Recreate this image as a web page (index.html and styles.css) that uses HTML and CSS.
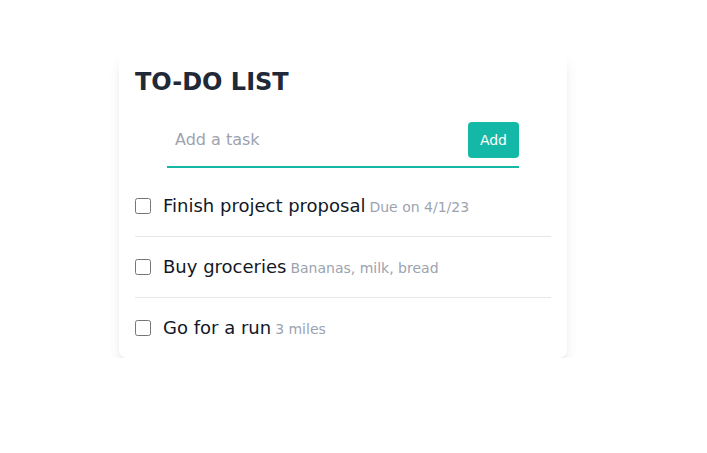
FILE: index.html
```html
<!DOCTYPE html>
<html lang="en">
<head>
<meta charset="utf-8">
<title>To-Do List</title>
<link rel="stylesheet" href="styles.css">
</head>
<body>
<div class="page">
  <div class="card">
    <h1 class="title">TO-DO LIST</h1>
    <form class="add-form">
      <input class="add-input" type="text" placeholder="Add a task">
      <button class="add-btn" type="button">Add</button>
    </form>
    <ul class="tasks">
      <li class="task">
        <input class="check" type="checkbox">
        <span class="task-text"><span class="task-name">Finish project proposal</span><span class="task-note">Due on 4/1/23</span></span>
      </li>
      <li class="task">
        <input class="check" type="checkbox">
        <span class="task-text"><span class="task-name">Buy groceries</span><span class="task-note">Bananas, milk, bread</span></span>
      </li>
      <li class="task">
        <input class="check" type="checkbox">
        <span class="task-text"><span class="task-name">Go for a run</span><span class="task-note">3 miles</span></span>
      </li>
    </ul>
  </div>
</div>
</body>
</html>
```

FILE: styles.css
```css
* { box-sizing: border-box; }
html, body {
  margin: 0;
  background: #ffffff;
  font-family: "DejaVu Sans", sans-serif;
}
.page {
  padding: 50px 0 0 119px;
}
.card {
  width: 448px;
  background: #ffffff;
  border-radius: 8px;
  box-shadow: 0 10px 15px -3px rgba(0,0,0,0.1), 0 4px 6px -4px rgba(0,0,0,0.1);
  padding: 16px 16px 0;
}
.title {
  margin: 0 0 16px;
  font-size: 24px;
  line-height: 32px;
  font-weight: 700;
  color: #1f2937;
}
.add-form {
  margin: 0 32px;
  display: flex;
  align-items: center;
  padding: 8px 0;
  border-bottom: 2px solid #14b8a6;
}
.add-input {
  flex: 1;
  min-width: 0;
  border: none;
  outline: none;
  padding: 0 8px;
  font-family: inherit;
  font-size: 16px;
  line-height: 24px;
  color: #374151;
  background: transparent;
}
.add-input::placeholder { color: #9ca3af; }
.add-btn {
  border: none;
  background: #14b8a6;
  color: #ffffff;
  font-family: inherit;
  font-size: 14px;
  line-height: 20px;
  padding: 8px 12px;
  border-radius: 4px;
}
.tasks {
  list-style: none;
  margin: 8px 0 0;
  padding: 0;
}
.task {
  display: flex;
  align-items: center;
  padding: 16px 0;
}
.task + .task { border-top: 1px solid #e5e7eb; }
.check {
  width: 16px;
  height: 16px;
  margin: 0 12px 0 0;
  flex: none;
}
.task-text {
  display: block;
  font-size: 18px;
  line-height: 28px;
  height: 28px;
  white-space: nowrap;
}
.task-name {
  color: #111827;
}
.task-note {
  margin-left: 4px;
  font-size: 14px;
  line-height: 1;
  color: #9ca3af;
}
```
